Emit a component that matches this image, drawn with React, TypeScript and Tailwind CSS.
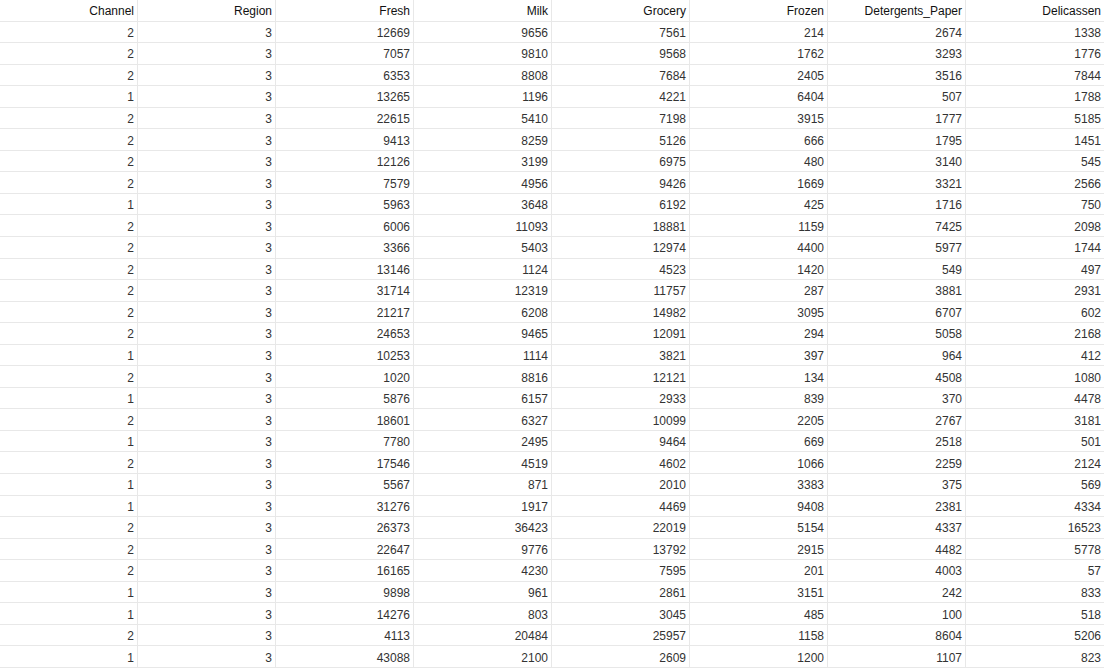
import React from "react";

const headers = ["Channel", "Region", "Fresh", "Milk", "Grocery", "Frozen", "Detergents_Paper", "Delicassen"];

const rows: number[][] = [
  [2, 3, 12669, 9656, 7561, 214, 2674, 1338],
  [2, 3, 7057, 9810, 9568, 1762, 3293, 1776],
  [2, 3, 6353, 8808, 7684, 2405, 3516, 7844],
  [1, 3, 13265, 1196, 4221, 6404, 507, 1788],
  [2, 3, 22615, 5410, 7198, 3915, 1777, 5185],
  [2, 3, 9413, 8259, 5126, 666, 1795, 1451],
  [2, 3, 12126, 3199, 6975, 480, 3140, 545],
  [2, 3, 7579, 4956, 9426, 1669, 3321, 2566],
  [1, 3, 5963, 3648, 6192, 425, 1716, 750],
  [2, 3, 6006, 11093, 18881, 1159, 7425, 2098],
  [2, 3, 3366, 5403, 12974, 4400, 5977, 1744],
  [2, 3, 13146, 1124, 4523, 1420, 549, 497],
  [2, 3, 31714, 12319, 11757, 287, 3881, 2931],
  [2, 3, 21217, 6208, 14982, 3095, 6707, 602],
  [2, 3, 24653, 9465, 12091, 294, 5058, 2168],
  [1, 3, 10253, 1114, 3821, 397, 964, 412],
  [2, 3, 1020, 8816, 12121, 134, 4508, 1080],
  [1, 3, 5876, 6157, 2933, 839, 370, 4478],
  [2, 3, 18601, 6327, 10099, 2205, 2767, 3181],
  [1, 3, 7780, 2495, 9464, 669, 2518, 501],
  [2, 3, 17546, 4519, 4602, 1066, 2259, 2124],
  [1, 3, 5567, 871, 2010, 3383, 375, 569],
  [1, 3, 31276, 1917, 4469, 9408, 2381, 4334],
  [2, 3, 26373, 36423, 22019, 5154, 4337, 16523],
  [2, 3, 22647, 9776, 13792, 2915, 4482, 5778],
  [2, 3, 16165, 4230, 7595, 201, 4003, 57],
  [1, 3, 9898, 961, 2861, 3151, 242, 833],
  [1, 3, 14276, 803, 3045, 485, 100, 518],
  [2, 3, 4113, 20484, 25957, 1158, 8604, 5206],
  [1, 3, 43088, 2100, 2609, 1200, 1107, 823],
];

function Cell({ children, last, header }: { children: React.ReactNode; last: boolean; header?: boolean }) {
  return (
    <div
      className={
        "flex items-center justify-end pr-[3px] pt-[2px] text-[12px] leading-none " +
        (last ? "" : "border-r border-[#e8e8e8] ") +
        (header ? "text-[#111]" : "text-[#333]")
      }
    >
      {children}
    </div>
  );
}

export default function App() {
  return (
    <div
      className="w-[1104px] h-[668px] overflow-hidden bg-white"
      style={{ fontFamily: '"Liberation Sans", Arial, sans-serif' }}
    >
      <div className="grid grid-cols-8 h-[21.55px] border-b border-[#e8e8e8]">
        {headers.map((h, i) => (
          <Cell key={h} last={i === headers.length - 1} header>
            {h}
          </Cell>
        ))}
      </div>
      {rows.map((r, ri) => (
        <div key={ri} className="grid grid-cols-8 h-[21.55px] border-b border-[#e8e8e8]">
          {r.map((v, i) => (
            <Cell key={i} last={i === r.length - 1}>
              {v}
            </Cell>
          ))}
        </div>
      ))}
    </div>
  );
}
